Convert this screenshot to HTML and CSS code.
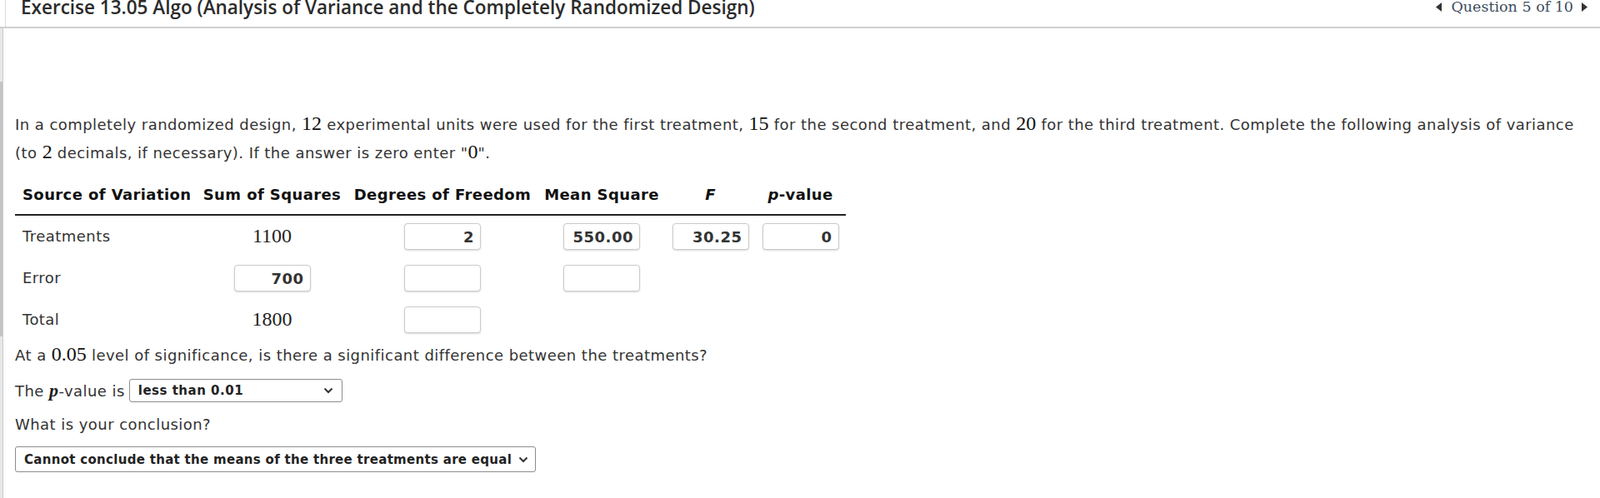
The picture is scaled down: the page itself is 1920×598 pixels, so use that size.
FILE: index.html
```html
<!DOCTYPE html>
<html>
<head>
  <title>Exercise 13.05 Algo</title>
  <link rel="stylesheet" href="styles.css">
</head>
<body>
  <div class="topbar">
    <div class="title">Exercise 13.05 Algo (Analysis of Variance and the Completely Randomized Design)</div>
    <div class="qnav">
      <svg class="arrow" width="7" height="11" viewBox="0 0 7 11"><polygon points="7,0 7,11 0,5.5"/></svg>
      <span>Question 5 of 10</span>
      <svg class="arrow" width="7" height="11" viewBox="0 0 7 11"><polygon points="0,0 0,11 7,5.5"/></svg>
    </div>
  </div>
  <div class="page">
    <div class="rail"><div class="rail-mark"></div></div>
    <div class="question">
      <p class="intro">In a completely randomized design, <span class="num">12</span> experimental units were used for the first treatment, <span class="num">15</span> for the second treatment, and <span class="num">20</span> for the third treatment. Complete the following analysis of variance (to <span class="num">2</span> decimals, if necessary). If the answer is zero enter "<span class="num">0</span>".</p>

      <table class="anova">
        <thead>
          <tr>
            <th class="c1">Source of Variation</th>
            <th class="c2">Sum of Squares</th>
            <th class="c3">Degrees of Freedom</th>
            <th class="c4">Mean Square</th>
            <th class="c5"><i>F</i></th>
            <th class="c6"><i>p</i>-value</th>
          </tr>
        </thead>
        <tbody>
          <tr>
            <td class="c1">Treatments</td>
            <td><span class="given">1100</span></td>
            <td><input class="cell" type="text" value="2"></td>
            <td><input class="cell" type="text" value="550.00"></td>
            <td><input class="cell" type="text" value="30.25"></td>
            <td><input class="cell" type="text" value="0"></td>
          </tr>
          <tr>
            <td class="c1">Error</td>
            <td><input class="cell" type="text" value="700"></td>
            <td><input class="cell" type="text" value=""></td>
            <td><input class="cell" type="text" value=""></td>
            <td></td>
            <td></td>
          </tr>
          <tr>
            <td class="c1">Total</td>
            <td><span class="given">1800</span></td>
            <td><input class="cell" type="text" value=""></td>
            <td></td>
            <td></td>
            <td></td>
          </tr>
        </tbody>
      </table>

      <div class="line sig">At a <span class="num">0.05</span> level of significance, is there a significant difference between the treatments?</div>

      <div class="line pval">
        <span>The <span class="mathp">p</span>-value is</span>
        <div class="dropdown short">
          <span>less than 0.01</span>
          <svg class="chev" width="12" height="8" viewBox="0 0 12 8"><polyline points="1.5,1.5 6,6 10.5,1.5"/></svg>
        </div>
      </div>

      <div class="line ask">What is your conclusion?</div>

      <div class="line concl">
        <div class="dropdown long">
          <span>Cannot conclude that the means of the three treatments are equal</span>
          <svg class="chev" width="12" height="8" viewBox="0 0 12 8"><polyline points="1.5,1.5 6,6 10.5,1.5"/></svg>
        </div>
      </div>
    </div>
  </div>
</body>
</html>
```

FILE: styles.css
```css
body {
  margin: 0;
  background-color: #fff;
  font-family: "DejaVu Sans", Verdana, sans-serif;
  color: #333;
  overflow: hidden;
}

.topbar {
  display: flex;
  justify-content: space-between;
  align-items: flex-start;
  height: 32px;
  padding-left: 6px;
  padding-right: 15px;
  border-bottom: 2px solid #cfcfcf;
  overflow: hidden;
}

.title {
  height: 36px;
  border-left: 1px solid #dcdcdc;
  padding-left: 18px;
  font-family: "Open Sans", sans-serif;
  font-weight: 600;
  font-size: 22.5px;
  line-height: 24px;
  color: #2b2b2b;
  margin-top: -3px;
}

.qnav {
  display: flex;
  align-items: center;
  margin-top: -2px;
  font-family: "DejaVu Serif", serif;
  font-size: 17.5px;
  line-height: 20px;
  color: #3d4b5c;
}

.qnav span {
  margin: 0 10px 0 12px;
}

.arrow {
  fill: #333;
  margin-top: 1px;
}

.page {
  display: flex;
  min-height: 564px;
}

.rail {
  width: 3px;
  background-color: #e8e8e8;
  border-right: 1px solid #cacaca;
}

.rail-mark {
  margin-top: 64px;
  height: 306px;
  background-color: #c4c4c4;
}

.question {
  flex: 1;
  padding: 98px 15px 0 14px;
  letter-spacing: 0.45px;
}

.intro {
  margin: 0;
  font-size: 18px;
  line-height: 33px;
}

.num {
  font-family: "Liberation Serif", serif;
  font-size: 24px;
  letter-spacing: 0;
  color: #111;
}

.anova {
  margin-top: 15px;
  border-collapse: collapse;
  table-layout: fixed;
  width: 997px;
  font-size: 18px;
}

.anova th {
  padding: 8px 4px 12px;
  line-height: 22px;
  font-weight: bold;
  letter-spacing: 0.4px;
  color: #111;
  text-align: center;
  border-bottom: 2px solid #222;
  white-space: nowrap;
}

.anova td {
  height: 50px;
  padding: 0 4px;
  text-align: center;
  vertical-align: middle;
  line-height: 22px;
  color: #333;
}

.anova .c1 {
  text-align: left;
  padding-left: 9px;
  width: 205px;
}

.anova .c2 { width: 173px; }
.anova .c3 { width: 220px; }
.anova .c4 { width: 146px; }
.anova .c5 { width: 99px; }
.anova .c6 { width: 101px; }

.given {
  font-family: "Liberation Serif", serif;
  font-size: 24px;
  letter-spacing: 0;
  color: #222;
}

.cell {
  display: block;
  margin: 0 auto;
  width: 92px;
  height: 32px;
  box-sizing: border-box;
  padding: 0 7px;
  border: 1px solid #cbcbcb;
  border-radius: 4px;
  box-shadow: 0 1px 2px rgba(0, 0, 0, 0.15);
  text-align: right;
  font-family: "DejaVu Sans", Verdana, sans-serif;
  font-weight: bold;
  font-size: 18px;
  letter-spacing: 0.5px;
  color: #333;
  background-color: #fff;
}

.line {
  font-size: 18px;
  line-height: 33px;
}

.pval {
  display: flex;
  align-items: center;
  height: 34px;
  margin-top: 9px;
}

.pval > span {
  margin-right: 5px;
}

.mathp {
  font-family: "Liberation Serif", serif;
  font-style: italic;
  font-weight: bold;
  font-size: 22px;
  color: #1e1e1e;
}

.ask {
  margin-top: 7px;
}

.concl {
  margin-top: 10px;
}

.dropdown {
  display: flex;
  justify-content: space-between;
  align-items: center;
  box-sizing: border-box;
  border: 1px solid #8c8c8c;
  border-radius: 3px;
  background-color: #fff;
  font-weight: bold;
  color: #222;
  line-height: 20px;
}

.dropdown.short {
  width: 256px;
  height: 28px;
  padding: 0 10px 0 10px;
  font-size: 15px;
  letter-spacing: 0.5px;
}

.dropdown.long {
  width: 625px;
  height: 31px;
  padding: 0 8px 0 10px;
  font-size: 15px;
  letter-spacing: 0.3px;
}

.chev {
  fill: none;
  stroke: #333;
  stroke-width: 2;
}
```
